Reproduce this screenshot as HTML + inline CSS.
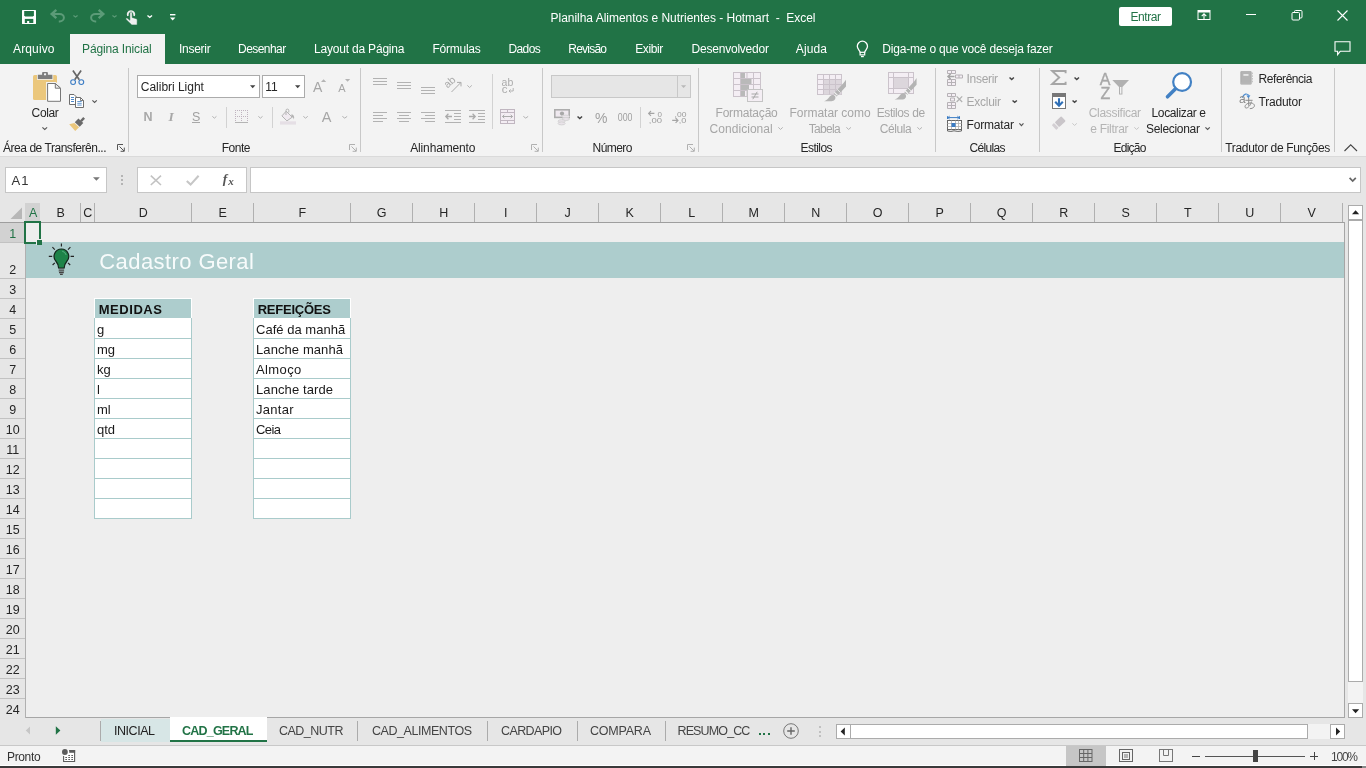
<!DOCTYPE html>
<html>
<head>
<meta charset="utf-8">
<title>Planilha Alimentos e Nutrientes - Hotmart - Excel</title>
<style>
*{box-sizing:border-box;margin:0;padding:0}
html,body{width:1366px;height:768px;overflow:hidden;background:#e6e6e6;font-family:"Liberation Sans",sans-serif;font-size:12px;color:#262626;will-change:transform}
.a,.t{position:absolute}
.t{white-space:nowrap}
svg{overflow:visible}
</style>
</head>
<body>
<div class="a" style="left:0px;top:0px;width:1366px;height:64px;background:#217346;"></div>
<svg class="a" style="left:22px;top:10px;" width="14" height="14" viewBox="0 0 14 14"><rect x="0" y="0" width="14" height="14" rx="0.6" fill="#fff"/><path d="M2.2 1 H11.9 V5.6 L10.9 6.6 H3.2 L2.2 5.6 Z" fill="#217346"/><rect x="2.8" y="8.9" width="8.5" height="4.1" fill="#217346"/><rect x="5.1" y="11" width="2.1" height="2.2" fill="#fff"/></svg>
<svg class="a" style="left:50px;top:9.4px;" width="16" height="15" viewBox="0 0 16 15"><path d="M2 5 H9.6 A4.3 3.7 0 0 1 9.6 12.4 H8.8" fill="none" stroke="#5c9b78" stroke-width="2"/><path d="M6.3 0.9 L1.7 5 L6.3 9.1" fill="none" stroke="#5c9b78" stroke-width="2.4"/></svg>
<svg class="a" style="left:71.6px;top:14.2px;" width="7.0" height="4.4" viewBox="0 0 7.0 4.4"><path d="M1.42 1.42 L3.50 2.98 L5.58 1.42" fill="none" stroke="#5c9b78" stroke-width="1.2"/></svg>
<svg class="a" style="left:90px;top:9.4px;" width="16" height="15" viewBox="0 0 16 15"><path d="M13 5 H5.4 A4.3 3.7 0 0 0 5.4 12.4 H6.2" fill="none" stroke="#5c9b78" stroke-width="2"/><path d="M8.7 0.9 L13.3 5 L8.7 9.1" fill="none" stroke="#5c9b78" stroke-width="2.4"/></svg>
<svg class="a" style="left:110.6px;top:14.2px;" width="7.0" height="4.4" viewBox="0 0 7.0 4.4"><path d="M1.42 1.42 L3.50 2.98 L5.58 1.42" fill="none" stroke="#5c9b78" stroke-width="1.2"/></svg>
<svg class="a" style="left:125px;top:8px;" width="14" height="18" viewBox="0 0 14 18"><path d="M3.0 7.9 A3.3 3.3 0 1 1 9.0 7.8" fill="none" stroke="#f0f0f0" stroke-width="1.9"/><path d="M4.9 5 a1.15 1.15 0 0 1 2.3 0 V9.5 L11.3 10.7 a1.2 1.2 0 0 1 0.9 1.3 L12.1 16.9 H6.8 L1.1 11.5 a0.9 0.9 0 0 1 1.3 -1.3 L4.9 12.3 Z" fill="#f0f0f0" stroke="#217346" stroke-width="0.5"/></svg>
<svg class="a" style="left:146.2px;top:14px;" width="7.5" height="4.8" viewBox="0 0 7.5 4.8"><path d="M1.46 1.46 L3.75 3.35 L6.04 1.46" fill="none" stroke="#fff" stroke-width="1.3"/></svg>
<svg class="a" style="left:169.8px;top:13.8px;" width="6" height="7" viewBox="0 0 6 7"><rect x="0" y="0" width="5.4" height="1.4" fill="#fff"/><path d="M0 3.6 H5.4 L2.7 6.4 Z" fill="#fff"/></svg>
<div class="t" style="left:550.50px;top:11px;font-size:12px;line-height:14px;height:14px;color:#fff;letter-spacing:-0.022px;white-space:pre;">Planilha Alimentos e Nutrientes - Hotmart  -  Excel</div>
<div class="a" style="left:1119px;top:7px;width:53px;height:19px;background:#fff;border-radius:2px;"></div>
<div class="t" style="left:1130.50px;top:10px;font-size:12px;line-height:14px;height:14px;color:#217346;letter-spacing:-0.436px;">Entrar</div>
<svg class="a" style="left:1197px;top:9px;" width="14" height="12" viewBox="0 0 14 12"><rect x="1" y="1.5" width="12" height="9" fill="none" stroke="#fff" stroke-width="1"/><rect x="1" y="1.5" width="12" height="2" fill="#fff"/><path d="M7 10 V4.8 M4.7 7.1 L7 4.8 L9.3 7.1" fill="none" stroke="#fff" stroke-width="1.1"/></svg>
<div class="a" style="left:1246px;top:14px;width:10px;height:1px;background:#fff;"></div>
<svg class="a" style="left:1291px;top:9px;" width="12" height="12" viewBox="0 0 12 12"><rect x="1" y="3.5" width="7.5" height="7.5" rx="1" fill="none" stroke="#fff" stroke-width="1"/><path d="M3.5 3.3 V2.5 A1 1 0 0 1 4.5 1.5 H10 A1 1 0 0 1 11 2.5 V8 A1 1 0 0 1 10 9 H8.8" fill="none" stroke="#fff" stroke-width="1"/></svg>
<svg class="a" style="left:1337px;top:10px;" width="11" height="11" viewBox="0 0 11 11"><path d="M0.5 0.5 L10.5 10.5 M10.5 0.5 L0.5 10.5" stroke="#fff" stroke-width="1.1" fill="none"/></svg>
<div class="a" style="left:70px;top:34px;width:95px;height:30px;background:#f3f3f3;"></div>
<div class="t" style="left:13.00px;top:42px;font-size:12px;line-height:14px;height:14px;color:#fff;letter-spacing:0.135px;">Arquivo</div>
<div class="t" style="left:82.00px;top:42px;font-size:12px;line-height:14px;height:14px;color:#217346;letter-spacing:-0.125px;">Página Inicial</div>
<div class="t" style="left:179.00px;top:42px;font-size:12px;line-height:14px;height:14px;color:#fff;letter-spacing:-0.265px;">Inserir</div>
<div class="t" style="left:238.00px;top:42px;font-size:12px;line-height:14px;height:14px;color:#fff;letter-spacing:-0.540px;">Desenhar</div>
<div class="t" style="left:314.00px;top:42px;font-size:12px;line-height:14px;height:14px;color:#fff;letter-spacing:-0.194px;">Layout da Página</div>
<div class="t" style="left:432.50px;top:42px;font-size:12px;line-height:14px;height:14px;color:#fff;letter-spacing:-0.251px;">Fórmulas</div>
<div class="t" style="left:508.50px;top:42px;font-size:12px;line-height:14px;height:14px;color:#fff;letter-spacing:-0.609px;">Dados</div>
<div class="t" style="left:568.25px;top:42px;font-size:12px;line-height:14px;height:14px;color:#fff;letter-spacing:-0.767px;">Revisão</div>
<div class="t" style="left:635.25px;top:42px;font-size:12px;line-height:14px;height:14px;color:#fff;letter-spacing:-0.401px;">Exibir</div>
<div class="t" style="left:691.50px;top:42px;font-size:12px;line-height:14px;height:14px;color:#fff;letter-spacing:-0.212px;">Desenvolvedor</div>
<div class="t" style="left:795.75px;top:42px;font-size:12px;line-height:14px;height:14px;color:#fff;letter-spacing:0.140px;">Ajuda</div>
<div class="t" style="left:882.25px;top:42px;font-size:12px;line-height:14px;height:14px;color:#fff;letter-spacing:-0.187px;">Diga-me o que você deseja fazer</div>
<svg class="a" style="left:856px;top:40px;" width="13" height="18" viewBox="0 0 13 18"><path d="M4.1 12.3 C3.7 10.4 1.3 9.2 1.3 6.3 a5.1 5.1 0 0 1 10.2 0 C11.5 9.2 9.1 10.4 8.7 12.3" fill="none" stroke="#fff" stroke-width="1.3"/><rect x="4.1" y="12.3" width="4.6" height="2.6" fill="none" stroke="#fff" stroke-width="1.2"/><path d="M5 16.6 H7.8" stroke="#fff" stroke-width="1.2"/></svg>
<svg class="a" style="left:1334px;top:41px;" width="17" height="15" viewBox="0 0 17 15"><path d="M1 0.8 H16 V10.3 H6.2 L3.6 13.6 V10.3 H1 Z" fill="none" stroke="#fff" stroke-width="1.1"/></svg>
<div class="a" style="left:0px;top:64px;width:1366px;height:92px;background:#f3f3f3;"></div>
<div class="a" style="left:0px;top:156px;width:1366px;height:1px;background:#dadada;"></div>
<div class="a" style="left:128px;top:68px;width:1px;height:84px;background:#c8c8c8;"></div>
<div class="a" style="left:360px;top:68px;width:1px;height:84px;background:#c8c8c8;"></div>
<div class="a" style="left:542px;top:68px;width:1px;height:84px;background:#c8c8c8;"></div>
<div class="a" style="left:698px;top:68px;width:1px;height:84px;background:#c8c8c8;"></div>
<div class="a" style="left:935px;top:68px;width:1px;height:84px;background:#c8c8c8;"></div>
<div class="a" style="left:1039px;top:68px;width:1px;height:84px;background:#c8c8c8;"></div>
<div class="a" style="left:1221px;top:68px;width:1px;height:84px;background:#c8c8c8;"></div>
<div class="a" style="left:1334px;top:68px;width:1px;height:84px;background:#c8c8c8;"></div>
<div class="a" style="left:226px;top:107px;width:1px;height:21px;background:#d2d2d2;"></div>
<div class="a" style="left:272px;top:107px;width:1px;height:21px;background:#d2d2d2;"></div>
<div class="a" style="left:492px;top:74px;width:1px;height:55px;background:#d2d2d2;"></div>
<div class="a" style="left:640px;top:107px;width:1px;height:21px;background:#d2d2d2;"></div>
<div class="t" style="left:3.00px;top:141px;font-size:12px;line-height:14px;height:14px;color:#262626;letter-spacing:-0.461px;">Área de Transferên...</div>
<div class="t" style="left:221.70px;top:141px;font-size:12px;line-height:14px;height:14px;color:#262626;letter-spacing:-0.496px;">Fonte</div>
<div class="t" style="left:410.20px;top:141px;font-size:12px;line-height:14px;height:14px;color:#262626;letter-spacing:-0.141px;">Alinhamento</div>
<div class="t" style="left:592.60px;top:141px;font-size:12px;line-height:14px;height:14px;color:#262626;letter-spacing:-0.576px;">Número</div>
<div class="t" style="left:800.60px;top:141px;font-size:12px;line-height:14px;height:14px;color:#262626;letter-spacing:-0.557px;">Estilos</div>
<div class="t" style="left:969.60px;top:141px;font-size:12px;line-height:14px;height:14px;color:#262626;letter-spacing:-0.670px;">Células</div>
<div class="t" style="left:1113.60px;top:141px;font-size:12px;line-height:14px;height:14px;color:#262626;letter-spacing:-0.778px;">Edição</div>
<div class="t" style="left:1225.30px;top:141px;font-size:12px;line-height:14px;height:14px;color:#262626;letter-spacing:-0.330px;">Tradutor de Funções</div>
<svg class="a" style="left:117px;top:144px;" width="8" height="8" viewBox="0 0 8 8"><path d="M0.5 6 V0.5 H6" fill="none" stroke="#555" stroke-width="1"/><path d="M2.5 2.5 L7 7 M7.3 3.6 V7.3 H3.6" fill="none" stroke="#555" stroke-width="1"/></svg>
<svg class="a" style="left:349px;top:144px;" width="8" height="8" viewBox="0 0 8 8"><path d="M0.5 6 V0.5 H6" fill="none" stroke="#b0b0b0" stroke-width="1"/><path d="M2.5 2.5 L7 7 M7.3 3.6 V7.3 H3.6" fill="none" stroke="#b0b0b0" stroke-width="1"/></svg>
<svg class="a" style="left:531px;top:144px;" width="8" height="8" viewBox="0 0 8 8"><path d="M0.5 6 V0.5 H6" fill="none" stroke="#b0b0b0" stroke-width="1"/><path d="M2.5 2.5 L7 7 M7.3 3.6 V7.3 H3.6" fill="none" stroke="#b0b0b0" stroke-width="1"/></svg>
<svg class="a" style="left:687px;top:144px;" width="8" height="8" viewBox="0 0 8 8"><path d="M0.5 6 V0.5 H6" fill="none" stroke="#b0b0b0" stroke-width="1"/><path d="M2.5 2.5 L7 7 M7.3 3.6 V7.3 H3.6" fill="none" stroke="#b0b0b0" stroke-width="1"/></svg>
<svg class="a" style="left:1344px;top:144px;" width="14" height="8" viewBox="0 0 14 8"><path d="M0.5 7 L6.7 0.8 L13 7" fill="none" stroke="#444" stroke-width="1.1"/></svg>
<svg class="a" style="left:33px;top:71px;" width="29" height="32" viewBox="0 0 29 32"><rect x="0" y="4" width="24" height="25" rx="1.6" fill="#ebc77c"/><path d="M4 8.7 V3.1 H8.4 V1.4 a1 1 0 0 1 1 -1 H14.6 a1 1 0 0 1 1 1 V3.1 H20.2 V8.7 Z" fill="#f3f3f3"/><path d="M4.8 7.9 V3.8 H9.1 V1.9 a0.9 0.9 0 0 1 0.9 -0.9 H14 a0.9 0.9 0 0 1 0.9 0.9 V3.8 H19.4 V7.9 Z" fill="#7d7d7d"/><rect x="11" y="2.3" width="2.1" height="2" rx="0.4" fill="#f3f3f3"/><path d="M14.6 12.5 H22.3 L27.5 17.2 V30.3 H14.6 Z" fill="#fff" stroke="#f3f3f3" stroke-width="3"/><path d="M14.6 12.5 H22.3 L27.5 17.2 V30.3 H14.6 Z" fill="#fff" stroke="#777" stroke-width="1"/><path d="M22.3 12.5 V17.2 H27.5 Z" fill="#ececec" stroke="#777" stroke-width="1" stroke-linejoin="bevel"/></svg>
<div class="t" style="left:31.60px;top:106px;font-size:12px;line-height:14px;height:14px;color:#262626;letter-spacing:-0.369px;">Colar</div>
<svg class="a" style="left:41.2px;top:125.7px;" width="7.5" height="4.8" viewBox="0 0 7.5 4.8"><path d="M1.39 1.39 L3.75 3.41 L6.12 1.39" fill="none" stroke="#555" stroke-width="1.1"/></svg>
<svg class="a" style="left:69px;top:70px;" width="16" height="16" viewBox="0 0 16 16"><path d="M3.9 0.6 L10.3 9.8 M12.1 0.6 L5.7 9.8" stroke="#666" stroke-width="1.7" fill="none"/><circle cx="4.1" cy="12.1" r="2.4" fill="none" stroke="#3b7cc4" stroke-width="1.1"/><circle cx="12.3" cy="12.1" r="2.4" fill="none" stroke="#3b7cc4" stroke-width="1.1"/></svg>
<svg class="a" style="left:69px;top:94px;" width="16" height="15" viewBox="0 0 16 15"><path d="M0.5 0.5 H5 L7.5 3 V10.5 H0.5 Z" fill="#fff" stroke="#6e6e6e" stroke-width="1"/><path d="M2 3.5 H5 M2 5.5 H5 M2 7.5 H5" stroke="#3b7cc4" stroke-width="0.9"/><path d="M6.5 3.5 H11.5 L14.5 6.5 V13.5 H6.5 Z" fill="#fff" stroke="#6e6e6e" stroke-width="1"/><path d="M11.5 3.5 V6.5 H14.5" fill="none" stroke="#6e6e6e" stroke-width="0.9"/><path d="M8.3 7.5 H12.7 M8.3 9.3 H12.7 M8.3 11.1 H12.7" stroke="#3b7cc4" stroke-width="0.8"/></svg>
<svg class="a" style="left:91.4px;top:98.7px;" width="7.2" height="4.9" viewBox="0 0 7.2 4.9"><path d="M1.39 1.39 L3.60 3.51 L5.81 1.39" fill="none" stroke="#555" stroke-width="1.1"/></svg>
<svg class="a" style="left:69px;top:116px;" width="17" height="16" viewBox="0 0 17 16"><path d="M11 4.4 L14.2 1 L16 2.7 L12.8 6.1 Z" fill="#6a6a6a"/><path d="M5.8 6.2 L9.4 2.4 L14.3 7 L10.7 10.8 Z" fill="#6a6a6a"/><path d="M0.2 8.2 L5.4 6.9 L10.1 11.3 L6.2 15 Z" fill="#ebc77c"/></svg>
<div class="a" style="left:137px;top:75px;width:123px;height:23px;background:#fff;border:1px solid #ababab;"></div>
<div class="t" style="left:140.80px;top:80px;font-size:12px;line-height:14px;height:14px;color:#262626;letter-spacing:-0.022px;">Calibri Light</div>
<svg class="a" style="left:250px;top:85px;" width="6" height="4" viewBox="0 0 6 4"><path d="M0 0.3 H5.4 L2.7 3.3 Z" fill="#444"/></svg>
<div class="a" style="left:262px;top:75px;width:43px;height:23px;background:#fff;border:1px solid #ababab;"></div>
<div class="t" style="left:265.20px;top:80px;font-size:12px;line-height:14px;height:14px;color:#262626;">11</div>
<svg class="a" style="left:295px;top:85px;" width="6" height="4" viewBox="0 0 6 4"><path d="M0 0.3 H5.4 L2.7 3.3 Z" fill="#444"/></svg>
<div class="t" style="left:313.00px;top:79px;font-size:14px;line-height:16px;height:16px;color:#a6a6a6;">A</div>
<svg class="a" style="left:321px;top:79px;" width="6" height="3" viewBox="0 0 6 3"><path d="M0 3 L2.6 0.2 L5.2 3 Z" fill="#b4b4b4"/></svg>
<div class="t" style="left:338.20px;top:82px;font-size:11px;line-height:12px;height:12px;color:#a6a6a6;">A</div>
<svg class="a" style="left:345px;top:79px;" width="6" height="3" viewBox="0 0 6 3"><path d="M0 0 H5.2 L2.6 2.8 Z" fill="#b4b4b4"/></svg>
<div class="t" style="left:143.50px;top:110px;font-size:12.5px;line-height:14px;height:14px;color:#a8a8a8;font-weight:bold;">N</div>
<div class="t" style="left:168.40px;top:109px;font-size:13.5px;line-height:15px;height:15px;color:#a8a8a8;font-weight:bold;font-style:italic;font-family:'Liberation Serif',serif;">I</div>
<div class="t" style="left:192.10px;top:110px;font-size:12.5px;line-height:14px;height:14px;color:#a0a0a0;">S</div>
<div class="a" style="left:192px;top:122px;width:8px;height:1px;background:#a8a8a8;"></div>
<svg class="a" style="left:210.6px;top:115px;" width="6.8" height="4.5" viewBox="0 0 6.8 4.5"><path d="M1.35 1.35 L3.40 3.15 L5.45 1.35" fill="none" stroke="#b2b2b2" stroke-width="1"/></svg>
<svg class="a" style="left:235px;top:110px;" width="13" height="13" viewBox="0 0 13 13"><path d="M0 0.5 H13 M0 6.5 H13 M0.5 0 V12 M6.5 0 V12 M12.5 0 V12" fill="none" stroke="#bfb3bf" stroke-width="1" stroke-dasharray="1 1" shape-rendering="crispEdges"/><path d="M0 12.5 H13" stroke="#b4b4b4" stroke-width="1" shape-rendering="crispEdges"/></svg>
<svg class="a" style="left:256.7px;top:115px;" width="6.9" height="4.5" viewBox="0 0 6.9 4.5"><path d="M1.35 1.35 L3.45 3.15 L5.55 1.35" fill="none" stroke="#b2b2b2" stroke-width="1"/></svg>
<svg class="a" style="left:280px;top:109px;" width="16" height="16" viewBox="0 0 16 16"><path d="M6.2 2.2 L12.2 8.2 L6.9 11.9 L1.9 6.9 Z" fill="#f0eaf0" stroke="#b4b4b4" stroke-width="1"/><path d="M6 6 V1.5 a1.4 1.4 0 0 1 2.8 0 V3.5" fill="none" stroke="#b4b4b4" stroke-width="1"/><path d="M11.5 5.2 c2.6 0.3 3.2 3 2.3 5.2 c-0.5 -1.6 -1.2 -2.4 -2.6 -2.8 Z" fill="#b4b4b4"/><rect x="0" y="12.3" width="16" height="3.3" fill="#e5dfe5"/></svg>
<svg class="a" style="left:302.4px;top:115px;" width="7.1" height="4.5" viewBox="0 0 7.1 4.5"><path d="M1.35 1.35 L3.55 3.15 L5.75 1.35" fill="none" stroke="#b2b2b2" stroke-width="1"/></svg>
<div class="t" style="left:321.80px;top:109px;font-size:14.5px;line-height:16px;height:16px;color:#a6a6a6;">A</div>
<svg class="a" style="left:341.2px;top:115px;" width="7.5" height="4.5" viewBox="0 0 7.5 4.5"><path d="M1.35 1.35 L3.75 3.15 L6.15 1.35" fill="none" stroke="#b2b2b2" stroke-width="1"/></svg>
<div class="a" style="left:373px;top:78px;width:14px;height:1px;background:#b2b2b2;"></div>
<div class="a" style="left:373px;top:81px;width:14px;height:1px;background:#b2b2b2;"></div>
<div class="a" style="left:373px;top:84px;width:14px;height:1px;background:#b2b2b2;"></div>
<div class="a" style="left:397px;top:82px;width:14px;height:1px;background:#b2b2b2;"></div>
<div class="a" style="left:397px;top:85px;width:14px;height:1px;background:#b2b2b2;"></div>
<div class="a" style="left:397px;top:88px;width:14px;height:1px;background:#b2b2b2;"></div>
<div class="a" style="left:421px;top:87px;width:14px;height:1px;background:#b2b2b2;"></div>
<div class="a" style="left:421px;top:90px;width:14px;height:1px;background:#b2b2b2;"></div>
<div class="a" style="left:421px;top:93px;width:14px;height:1px;background:#b2b2b2;"></div>
<div class="a" style="left:373px;top:112px;width:14px;height:1px;background:#b2b2b2;"></div>
<div class="a" style="left:373px;top:115px;width:10px;height:1px;background:#b2b2b2;"></div>
<div class="a" style="left:373px;top:118px;width:14px;height:1px;background:#b2b2b2;"></div>
<div class="a" style="left:373px;top:121px;width:10px;height:1px;background:#b2b2b2;"></div>
<div class="a" style="left:397.0px;top:112px;width:14px;height:1px;background:#b2b2b2;"></div>
<div class="a" style="left:399.0px;top:115px;width:10px;height:1px;background:#b2b2b2;"></div>
<div class="a" style="left:397.0px;top:118px;width:14px;height:1px;background:#b2b2b2;"></div>
<div class="a" style="left:399.0px;top:121px;width:10px;height:1px;background:#b2b2b2;"></div>
<div class="a" style="left:421px;top:112px;width:14px;height:1px;background:#b2b2b2;"></div>
<div class="a" style="left:425px;top:115px;width:10px;height:1px;background:#b2b2b2;"></div>
<div class="a" style="left:421px;top:118px;width:14px;height:1px;background:#b2b2b2;"></div>
<div class="a" style="left:425px;top:121px;width:10px;height:1px;background:#b2b2b2;"></div>
<svg class="a" style="left:445px;top:78px;" width="17" height="15" viewBox="0 0 17 15"><text x="0" y="0" font-family="Liberation Sans" font-size="10.5" fill="#ababab" transform="translate(2.6,10.6) rotate(-42)">ab</text><path d="M6.5 14 L15.6 4.8 M12 4.4 H16 V8.4" fill="none" stroke="#ababab" stroke-width="1"/></svg>
<svg class="a" style="left:465.5px;top:84px;" width="7.2" height="4.9" viewBox="0 0 7.2 4.9"><path d="M1.35 1.35 L3.60 3.55 L5.85 1.35" fill="none" stroke="#b2b2b2" stroke-width="1"/></svg>
<svg class="a" style="left:445px;top:110px;" width="16" height="13" viewBox="0 0 16 13"><path d="M0 0.5 H16 M0 12.5 H16 M9 3.5 H16 M9 6.5 H16 M9 9.5 H16" stroke="#b2b2b2" stroke-width="1"/><path d="M0.8 6.5 H7 M3.4 3.8 L0.8 6.5 L3.4 9.2" fill="none" stroke="#ababab" stroke-width="1.3"/></svg>
<svg class="a" style="left:469px;top:110px;" width="16" height="13" viewBox="0 0 16 13"><path d="M0 0.5 H16 M0 12.5 H16 M9 3.5 H16 M9 6.5 H16 M9 9.5 H16" stroke="#b2b2b2" stroke-width="1"/><path d="M0 6.5 H6.2 M3.6 3.8 L6.2 6.5 L3.6 9.2" fill="none" stroke="#ababab" stroke-width="1.3"/></svg>
<div class="t" style="left:501.60px;top:76px;font-size:10.5px;line-height:12px;height:12px;color:#ababab;">ab</div>
<div class="t" style="left:501.80px;top:83px;font-size:11.5px;line-height:12px;height:12px;color:#ababab;">c</div>
<svg class="a" style="left:508px;top:88px;" width="6" height="5" viewBox="0 0 6 5"><path d="M5.2 0 V3 H1 M2.6 1.4 L1 3 L2.6 4.6" fill="none" stroke="#ababab" stroke-width="0.9"/></svg>
<svg class="a" style="left:500px;top:109px;" width="15" height="15" viewBox="0 0 15 15"><rect x="0.5" y="0.5" width="14" height="14" fill="#f3edf3" stroke="#c0b6c0" stroke-width="1"/><path d="M0.5 3.5 H14.5 M0.5 11.5 H14.5 M7.5 0.5 V3.5 M7.5 11.5 V14.5" stroke="#c0b6c0" stroke-width="1"/><path d="M2.5 7.5 H12.5 M4.3 5.8 L2.5 7.5 L4.3 9.2 M10.7 5.8 L12.5 7.5 L10.7 9.2" fill="none" stroke="#ababab" stroke-width="1"/></svg>
<svg class="a" style="left:522.3px;top:115px;" width="7.5" height="4.5" viewBox="0 0 7.5 4.5"><path d="M1.35 1.35 L3.75 3.15 L6.15 1.35" fill="none" stroke="#b2b2b2" stroke-width="1"/></svg>
<div class="a" style="left:551px;top:75px;width:140px;height:23px;background:#e6e6e6;border:1px solid #c8c8c8;"></div>
<div class="a" style="left:677px;top:76px;width:1px;height:21px;background:#c8c8c8;"></div>
<svg class="a" style="left:681px;top:85px;" width="6" height="4" viewBox="0 0 6 4"><path d="M0 0.2 H5.2 L2.6 3 Z" fill="#b8b8b8"/></svg>
<svg class="a" style="left:554px;top:109px;" width="17" height="16" viewBox="0 0 17 16"><rect x="0.8" y="0.8" width="14.4" height="7.6" fill="#efe9ef" stroke="#adadad" stroke-width="1.6"/><circle cx="8" cy="4.6" r="2.1" fill="#a8a8a8"/><ellipse cx="11.8" cy="7.6" rx="3.6" ry="1.5" fill="#e9e3e9" stroke="#cfcfcf" stroke-width="0.8"/><ellipse cx="11.8" cy="10" rx="3.6" ry="1.5" fill="#e9e3e9" stroke="#cfcfcf" stroke-width="0.8"/><ellipse cx="7.6" cy="12.2" rx="3.6" ry="1.5" fill="#e9e3e9" stroke="#cfcfcf" stroke-width="0.8"/><ellipse cx="7.6" cy="14.4" rx="3.6" ry="1.5" fill="#e9e3e9" stroke="#cfcfcf" stroke-width="0.8"/></svg>
<svg class="a" style="left:576.2px;top:115px;" width="7.6" height="5" viewBox="0 0 7.6 5"><path d="M1.52 1.52 L3.80 3.48 L6.07 1.52" fill="none" stroke="#444" stroke-width="1.5"/></svg>
<div class="t" style="left:595.00px;top:110px;font-size:14px;line-height:16px;height:16px;color:#a0a0a0;">%</div>
<div class="t" style="left:617.80px;top:113px;font-size:8.8px;line-height:10px;height:10px;color:#a0a0a0;transform:scaleY(1.2);transform-origin:0 8px;">000</div>
<svg class="a" style="left:648px;top:110px;" width="15" height="14" viewBox="0 0 15 14"><path d="M0.6 3.4 H6.4 M3 1 L0.6 3.4 L3 5.8" fill="none" stroke="#a4a4a4" stroke-width="1.1"/><text x="9.6" y="6.6" font-family="Liberation Sans" font-size="8" fill="#9c9c9c">0</text><text x="0.8" y="13.4" font-family="Liberation Sans" font-size="8" fill="#9c9c9c" textLength="13.2" lengthAdjust="spacingAndGlyphs">,00</text></svg>
<svg class="a" style="left:672px;top:110px;" width="15" height="14" viewBox="0 0 15 14"><text x="2.6" y="6.6" font-family="Liberation Sans" font-size="8" fill="#9c9c9c" textLength="11.8" lengthAdjust="spacingAndGlyphs">,00</text><path d="M0.2 10.4 H6 M3.6 8 L6 10.4 L3.6 12.8" fill="none" stroke="#a4a4a4" stroke-width="1.1"/><text x="6.8" y="13.4" font-family="Liberation Sans" font-size="8" fill="#9c9c9c" textLength="7.6" lengthAdjust="spacingAndGlyphs">,0</text></svg>
<svg class="a" style="left:733px;top:72px;" width="31" height="31" viewBox="0 0 31 31"><rect x="0.5" y="0.5" width="27" height="24" fill="#f4eef4" stroke="#cbc3cb" stroke-width="1"/><path d="M7.5 0.5 V24.5 M14 0.5 V24.5 M20.5 0.5 V24.5 M0.5 6.5 H27.5 M0.5 12.5 H27.5 M0.5 18.5 H27.5" stroke="#cbc3cb" stroke-width="1"/><rect x="8" y="1" width="4" height="5" fill="#b9b9b9"/><rect x="8" y="7" width="10.5" height="5" fill="#b9b9b9"/><rect x="8" y="13" width="8" height="5" fill="#b9b9b9"/><rect x="8" y="19" width="4" height="5" fill="#b9b9b9"/><rect x="14.5" y="17.5" width="15" height="12" fill="#f4eef4" stroke="#c4c4c4" stroke-width="1"/><path d="M18.5 22 H25.5 M18.5 25 H25.5 M24.2 19.8 L19.8 27.2" stroke="#a8a8a8" stroke-width="1" fill="none"/></svg>
<div class="t" style="left:715.50px;top:106px;font-size:12px;line-height:14px;height:14px;color:#a6a6a6;letter-spacing:-0.192px;">Formatação</div>
<div class="t" style="left:709.60px;top:122px;font-size:12px;line-height:14px;height:14px;color:#a6a6a6;letter-spacing:0.039px;">Condicional</div>
<svg class="a" style="left:776.6px;top:125.7px;" width="7.1" height="4.8" viewBox="0 0 7.1 4.8"><path d="M1.35 1.35 L3.55 3.45 L5.75 1.35" fill="none" stroke="#b2b2b2" stroke-width="1"/></svg>
<svg class="a" style="left:817px;top:74px;" width="30" height="29" viewBox="0 0 30 29"><rect x="0.5" y="0.5" width="24" height="20" fill="#f4eef4" stroke="#cbc3cb" stroke-width="1"/><rect x="6.5" y="5.5" width="18" height="15" fill="#dcd6dc"/><path d="M6.5 0.5 V20.5 M12.5 0.5 V20.5 M18.5 0.5 V20.5 M0.5 5.5 H24.5 M0.5 10.5 H24.5 M0.5 15.5 H24.5" stroke="#cbc3cb" stroke-width="1"/><g transform="translate(7,5.2)"><path d="M0 22 C2.5 21.5 4 19.5 5.5 17.5 C7.5 15 10.5 15.3 11.3 17.6 C12 20 10 22 7.5 22 Z" fill="#b4b4b4"/><path d="M9.6 14.6 L19.5 3.8 L22 0.5 V7.2 L12.8 17.2 Z" fill="#b4b4b4"/><path d="M10.4 13.2 L13.6 16.2" stroke="#f3f3f3" stroke-width="1.2"/><path d="M13.2 10.2 L16.4 13.2" stroke="#f3f3f3" stroke-width="0.9"/></g></svg>
<div class="t" style="left:789.50px;top:106px;font-size:12px;line-height:14px;height:14px;color:#a6a6a6;letter-spacing:-0.021px;">Formatar como</div>
<div class="t" style="left:808.80px;top:122px;font-size:12px;line-height:14px;height:14px;color:#a6a6a6;letter-spacing:-0.712px;">Tabela</div>
<svg class="a" style="left:844.5px;top:125.7px;" width="7.3" height="4.8" viewBox="0 0 7.3 4.8"><path d="M1.35 1.35 L3.65 3.45 L5.95 1.35" fill="none" stroke="#b2b2b2" stroke-width="1"/></svg>
<svg class="a" style="left:888px;top:72px;" width="30" height="29" viewBox="0 0 30 29"><rect x="0.5" y="0.5" width="25" height="21" fill="#f4eef4" stroke="#cbc3cb" stroke-width="1"/><rect x="5.5" y="5.5" width="15" height="11" fill="#dcd6dc"/><path d="M5.5 0.5 V21.5 M20.5 0.5 V21.5 M0.5 5.5 H25.5 M0.5 16.5 H25.5" stroke="#cbc3cb" stroke-width="1"/><g transform="translate(6.6,5.6)"><path d="M0 22 C2.5 21.5 4 19.5 5.5 17.5 C7.5 15 10.5 15.3 11.3 17.6 C12 20 10 22 7.5 22 Z" fill="#b4b4b4"/><path d="M9.6 14.6 L19.5 3.8 L22 0.5 V7.2 L12.8 17.2 Z" fill="#b4b4b4"/><path d="M10.4 13.2 L13.6 16.2" stroke="#f3f3f3" stroke-width="1.2"/><path d="M13.2 10.2 L16.4 13.2" stroke="#f3f3f3" stroke-width="0.9"/></g></svg>
<div class="t" style="left:876.70px;top:106px;font-size:12px;line-height:14px;height:14px;color:#a6a6a6;letter-spacing:-0.403px;">Estilos de</div>
<div class="t" style="left:879.80px;top:122px;font-size:12px;line-height:14px;height:14px;color:#a6a6a6;letter-spacing:-0.444px;">Célula</div>
<svg class="a" style="left:915.5px;top:125.7px;" width="7.3" height="4.8" viewBox="0 0 7.3 4.8"><path d="M1.35 1.35 L3.65 3.45 L5.95 1.35" fill="none" stroke="#b2b2b2" stroke-width="1"/></svg>
<svg class="a" style="left:947px;top:70px;" width="16" height="16" viewBox="0 0 16 16"><path d="M0.5 0.5 H8.5 V3.5 H0.5 Z M4.5 0.5 V3.5 M0.5 9.5 H8.5 V15.5 H0.5 Z M4.5 9.5 V15.5 M0.5 12.5 H8.5 M8.5 5 H15.5 V8 H8.5 Z M12 5 V8" fill="#f4eef4" stroke="#b6b2b6" stroke-width="1"/><path d="M1 6.5 H7.5 M3.6 4 L1 6.5 L3.6 9" fill="none" stroke="#a4a4a4" stroke-width="1.5"/></svg>
<div class="t" style="left:966.60px;top:72px;font-size:12px;line-height:14px;height:14px;color:#a6a6a6;letter-spacing:-0.323px;">Inserir</div>
<svg class="a" style="left:1008.4px;top:75.9px;" width="7.4" height="5.0" viewBox="0 0 7.4 5.0"><path d="M1.52 1.52 L3.70 3.48 L5.87 1.52" fill="none" stroke="#444" stroke-width="1.5"/></svg>
<svg class="a" style="left:947px;top:93px;" width="16" height="16" viewBox="0 0 16 16"><path d="M0.5 0.5 H8.5 V3.5 H0.5 Z M4.5 0.5 V3.5 M0.5 9.5 H8.5 V15.5 H0.5 Z M4.5 9.5 V15.5 M0.5 12.5 H8.5 M3.5 5 H7.5 V8 H3.5 Z" fill="#f4eef4" stroke="#b6b2b6" stroke-width="1"/><path d="M9.6 3.4 L15.2 9 M15.2 3.4 L9.6 9" fill="none" stroke="#b0b0b0" stroke-width="1.2"/></svg>
<div class="t" style="left:966.60px;top:95px;font-size:12px;line-height:14px;height:14px;color:#a6a6a6;letter-spacing:-0.284px;">Excluir</div>
<svg class="a" style="left:1011.4px;top:98.7px;" width="7.4" height="4.9" viewBox="0 0 7.4 4.9"><path d="M1.52 1.52 L3.70 3.37 L5.87 1.52" fill="none" stroke="#444" stroke-width="1.5"/></svg>
<svg class="a" style="left:947px;top:116px;" width="15" height="16" viewBox="0 0 15 16"><path d="M0.5 0.2 V3 M12.5 0.2 V3 M0.5 1.6 H12.5 M2.6 0.2 L0.9 1.6 L2.6 3 M10.4 0.2 L12.1 1.6 L10.4 3" fill="none" stroke="#3b7cc4" stroke-width="1"/><rect x="0.5" y="4.5" width="14" height="9" fill="#fff" stroke="#666" stroke-width="1"/><path d="M4.5 4.5 V13.5 M8.5 4.5 V13.5 M11.5 4.5 V13.5 M0.5 7.5 H14.5 M0.5 10.5 H14.5" stroke="#b0b0b0" stroke-width="0.8"/><rect x="4.5" y="7" width="4" height="4" fill="#3b7cc4"/><path d="M0.5 13.5 V15 Q4 16 7 14.8 Q11 16 14.5 15 V13.5" fill="none" stroke="#666" stroke-width="1"/></svg>
<div class="t" style="left:966.60px;top:118px;font-size:12px;line-height:14px;height:14px;color:#262626;letter-spacing:-0.182px;">Formatar</div>
<svg class="a" style="left:1017.5px;top:122px;" width="6.9" height="5" viewBox="0 0 6.9 5"><path d="M1.42 1.42 L3.45 3.58 L5.48 1.42" fill="none" stroke="#555" stroke-width="1.2"/></svg>
<svg class="a" style="left:1051px;top:70px;" width="16" height="15" viewBox="0 0 16 15"><path d="M14.6 3.2 V1 H1.2 L8.2 7.5 L1.2 14 H14.6 V11.8" fill="none" stroke="#a6a6a6" stroke-width="1.9" stroke-linejoin="miter"/></svg>
<svg class="a" style="left:1073.3px;top:75.9px;" width="7.5" height="5.0" viewBox="0 0 7.5 5.0"><path d="M1.52 1.52 L3.75 3.48 L5.97 1.52" fill="none" stroke="#444" stroke-width="1.5"/></svg>
<svg class="a" style="left:1052px;top:93px;" width="14" height="16" viewBox="0 0 14 16"><rect x="0.5" y="0.5" width="13" height="15" fill="#fff" stroke="#777" stroke-width="1"/><rect x="0" y="0" width="14" height="4" fill="#777"/><path d="M7 5.2 V12.6 M3.2 8.8 L7 12.8 L10.8 8.8" fill="none" stroke="#2f6fb6" stroke-width="2.1"/></svg>
<svg class="a" style="left:1071.4px;top:98.7px;" width="7.2" height="4.9" viewBox="0 0 7.2 4.9"><path d="M1.52 1.52 L3.60 3.37 L5.67 1.52" fill="none" stroke="#444" stroke-width="1.5"/></svg>
<svg class="a" style="left:1052px;top:117px;" width="14" height="13" viewBox="0 0 14 13"><g transform="translate(6.7,6.1) rotate(-43)"><rect x="-2.4" y="-3.3" width="9" height="6.6" rx="1" fill="#c9c5c9"/><rect x="-6.4" y="-3.3" width="3.1" height="6.6" rx="0.6" fill="#d3cfd3"/></g></svg>
<svg class="a" style="left:1071.4px;top:122px;" width="7.2" height="4.8" viewBox="0 0 7.2 4.8"><path d="M1.35 1.35 L3.60 3.45 L5.85 1.35" fill="none" stroke="#c8c8c8" stroke-width="1"/></svg>
<div class="t" style="left:1099.80px;top:71px;font-size:16px;line-height:17px;height:17px;color:#a8a8a8;-webkit-text-stroke:0.35px #a8a8a8;">A</div>
<div class="t" style="left:1100.60px;top:85px;font-size:16px;line-height:17px;height:17px;color:#a8a8a8;-webkit-text-stroke:0.35px #a8a8a8;">Z</div>
<svg class="a" style="left:1112px;top:80px;" width="18" height="15" viewBox="0 0 18 15"><path d="M0.3 0 H17 L10.4 7 V14.6 H7 V7 Z" fill="#b0b0b0"/><rect x="8" y="7" width="1.4" height="6.6" fill="#f3f3f3"/></svg>
<div class="t" style="left:1088.70px;top:106px;font-size:12px;line-height:14px;height:14px;color:#b4b4b4;letter-spacing:-0.294px;">Classificar</div>
<div class="t" style="left:1090.30px;top:122px;font-size:12px;line-height:14px;height:14px;color:#b4b4b4;letter-spacing:-0.296px;">e Filtrar</div>
<svg class="a" style="left:1132.5px;top:125.7px;" width="7.2" height="4.8" viewBox="0 0 7.2 4.8"><path d="M1.35 1.35 L3.60 3.45 L5.85 1.35" fill="none" stroke="#c4c4c4" stroke-width="1"/></svg>
<svg class="a" style="left:1165px;top:70px;" width="28" height="29" viewBox="0 0 28 29"><circle cx="17.1" cy="12" r="8.9" fill="#fff" stroke="#4281c4" stroke-width="2.2"/><path d="M10.3 19 L2.5 26.8" stroke="#4281c4" stroke-width="3.6" stroke-linecap="round"/></svg>
<div class="t" style="left:1151.50px;top:106px;font-size:12px;line-height:14px;height:14px;color:#262626;letter-spacing:-0.353px;">Localizar e</div>
<div class="t" style="left:1146.00px;top:122px;font-size:12px;line-height:14px;height:14px;color:#262626;letter-spacing:-0.311px;">Selecionar</div>
<svg class="a" style="left:1203.5px;top:125.7px;" width="7.2" height="4.8" viewBox="0 0 7.2 4.8"><path d="M1.42 1.42 L3.60 3.38 L5.78 1.42" fill="none" stroke="#555" stroke-width="1.2"/></svg>
<svg class="a" style="left:1240px;top:71px;" width="14" height="14" viewBox="0 0 14 14"><rect x="0.4" y="0.2" width="11.2" height="13.4" rx="0.8" fill="#a2a2a2"/><rect x="1.2" y="0.8" width="9.6" height="10.6" fill="#b4b4b4"/><rect x="3.4" y="3.1" width="5.1" height="1.7" fill="#ececec"/><rect x="0.4" y="11.6" width="11.2" height="0.9" fill="#c9c9c9"/><path d="M12.5 1.6 V12" stroke="#c0c0c0" stroke-width="0.9" stroke-dasharray="1.6 1.1"/></svg>
<div class="t" style="left:1258.60px;top:72px;font-size:12px;line-height:14px;height:14px;color:#262626;letter-spacing:-0.459px;">Referência</div>
<svg class="a" style="left:1239px;top:92px;" width="17" height="18" viewBox="0 0 17 18"><path d="M3.2 5.6 Q6.3 -0.2 9.9 3.4" fill="none" stroke="#4a8bd0" stroke-width="1.2"/><path d="M7.4 3.6 L11.4 3.2 L9.5 6.4 Z" fill="#4a8bd0"/><text x="0" y="11.4" font-family="Liberation Sans" font-size="12" fill="#8c8c8c">a</text><path d="M6.4 8.3 H13.6 M9.7 5.8 V13.8 M12.4 9.6 C11.8 13.2 8.8 16.4 6.9 16 C5 15.4 6.2 11.9 10 11.1 C13.8 10.4 16.2 12.6 15.2 14.6 C14.4 16.2 12.2 16.7 10.8 16.6" fill="none" stroke="#8c8c8c" stroke-width="1"/></svg>
<div class="t" style="left:1258.60px;top:95px;font-size:12px;line-height:14px;height:14px;color:#262626;letter-spacing:-0.229px;">Tradutor</div>
<div class="a" style="left:5px;top:167px;width:102px;height:26px;background:#fff;border:1px solid #c6c6c6;"></div>
<div class="t" style="left:11.60px;top:173px;font-size:13px;line-height:15px;height:15px;color:#333;letter-spacing:1.099px;">A1</div>
<svg class="a" style="left:93px;top:177px;" width="7" height="4" viewBox="0 0 7 4"><path d="M0 0.2 H6.8 L3.4 3.8 Z" fill="#777"/></svg>
<div class="a" style="left:121px;top:175px;width:2px;height:2px;background:#b4b4b4;"></div>
<div class="a" style="left:121px;top:179px;width:2px;height:2px;background:#b4b4b4;"></div>
<div class="a" style="left:121px;top:183px;width:2px;height:2px;background:#b4b4b4;"></div>
<div class="a" style="left:137px;top:167px;width:110px;height:26px;background:#fff;border:1px solid #c6c6c6;"></div>
<svg class="a" style="left:150px;top:175px;" width="12" height="11" viewBox="0 0 12 11"><path d="M0.8 0.6 L11 10 M11 0.6 L0.8 10" stroke="#c2c2c2" stroke-width="1.6" fill="none"/></svg>
<svg class="a" style="left:186px;top:175px;" width="14" height="11" viewBox="0 0 14 11"><path d="M0.8 6 L4.6 9.6 L12.6 0.8" stroke="#c6c6c6" stroke-width="2.1" fill="none"/></svg>
<div class="t" style="left:222.80px;top:171px;font-size:13.5px;line-height:15px;height:15px;color:#555;font-weight:bold;font-style:italic;font-family:'Liberation Serif',serif;">f</div>
<div class="t" style="left:228.20px;top:175px;font-size:11px;line-height:12px;height:12px;color:#555;font-weight:bold;font-style:italic;font-family:'Liberation Serif',serif;">x</div>
<div class="a" style="left:250px;top:167px;width:1111px;height:26px;background:#fff;border:1px solid #c6c6c6;"></div>
<svg class="a" style="left:1349px;top:177px;" width="8" height="6" viewBox="0 0 8 6"><path d="M0.6 0.8 L3.7 4 L6.8 0.8" fill="none" stroke="#666" stroke-width="1.7"/></svg>
<div class="a" style="left:26px;top:223px;width:1318px;height:495px;background:#eeeeee;"></div>
<div class="a" style="left:25px;top:203px;width:15px;height:19px;background:#d2d2d2;"></div>
<div class="t" style="left:29.03px;top:206px;font-size:12.5px;line-height:14px;height:14px;color:#217346;">A</div>
<div class="a" style="left:80px;top:203px;width:1px;height:19px;background:#b0b0b0;"></div>
<div class="t" style="left:56.53px;top:206px;font-size:12.5px;line-height:14px;height:14px;color:#262626;">B</div>
<div class="a" style="left:94px;top:203px;width:1px;height:19px;background:#b0b0b0;"></div>
<div class="t" style="left:83.19px;top:206px;font-size:12.5px;line-height:14px;height:14px;color:#262626;">C</div>
<div class="a" style="left:191px;top:203px;width:1px;height:19px;background:#b0b0b0;"></div>
<div class="t" style="left:138.69px;top:206px;font-size:12.5px;line-height:14px;height:14px;color:#262626;">D</div>
<div class="a" style="left:253px;top:203px;width:1px;height:19px;background:#b0b0b0;"></div>
<div class="t" style="left:218.53px;top:206px;font-size:12.5px;line-height:14px;height:14px;color:#262626;">E</div>
<div class="a" style="left:350px;top:203px;width:1px;height:19px;background:#b0b0b0;"></div>
<div class="t" style="left:298.38px;top:206px;font-size:12.5px;line-height:14px;height:14px;color:#262626;">F</div>
<div class="a" style="left:412px;top:203px;width:1px;height:19px;background:#b0b0b0;"></div>
<div class="t" style="left:376.84px;top:206px;font-size:12.5px;line-height:14px;height:14px;color:#262626;">G</div>
<div class="a" style="left:474px;top:203px;width:1px;height:19px;background:#b0b0b0;"></div>
<div class="t" style="left:439.19px;top:206px;font-size:12.5px;line-height:14px;height:14px;color:#262626;">H</div>
<div class="a" style="left:536px;top:203px;width:1px;height:19px;background:#b0b0b0;"></div>
<div class="t" style="left:503.96px;top:206px;font-size:12.5px;line-height:14px;height:14px;color:#262626;">I</div>
<div class="a" style="left:598px;top:203px;width:1px;height:19px;background:#b0b0b0;"></div>
<div class="t" style="left:564.58px;top:206px;font-size:12.5px;line-height:14px;height:14px;color:#262626;">J</div>
<div class="a" style="left:660px;top:203px;width:1px;height:19px;background:#b0b0b0;"></div>
<div class="t" style="left:625.53px;top:206px;font-size:12.5px;line-height:14px;height:14px;color:#262626;">K</div>
<div class="a" style="left:722px;top:203px;width:1px;height:19px;background:#b0b0b0;"></div>
<div class="t" style="left:688.22px;top:206px;font-size:12.5px;line-height:14px;height:14px;color:#262626;">L</div>
<div class="a" style="left:784px;top:203px;width:1px;height:19px;background:#b0b0b0;"></div>
<div class="t" style="left:748.49px;top:206px;font-size:12.5px;line-height:14px;height:14px;color:#262626;">M</div>
<div class="a" style="left:846px;top:203px;width:1px;height:19px;background:#b0b0b0;"></div>
<div class="t" style="left:811.19px;top:206px;font-size:12.5px;line-height:14px;height:14px;color:#262626;">N</div>
<div class="a" style="left:908px;top:203px;width:1px;height:19px;background:#b0b0b0;"></div>
<div class="t" style="left:872.84px;top:206px;font-size:12.5px;line-height:14px;height:14px;color:#262626;">O</div>
<div class="a" style="left:970px;top:203px;width:1px;height:19px;background:#b0b0b0;"></div>
<div class="t" style="left:935.53px;top:206px;font-size:12.5px;line-height:14px;height:14px;color:#262626;">P</div>
<div class="a" style="left:1032px;top:203px;width:1px;height:19px;background:#b0b0b0;"></div>
<div class="t" style="left:996.84px;top:206px;font-size:12.5px;line-height:14px;height:14px;color:#262626;">Q</div>
<div class="a" style="left:1094px;top:203px;width:1px;height:19px;background:#b0b0b0;"></div>
<div class="t" style="left:1059.19px;top:206px;font-size:12.5px;line-height:14px;height:14px;color:#262626;">R</div>
<div class="a" style="left:1156px;top:203px;width:1px;height:19px;background:#b0b0b0;"></div>
<div class="t" style="left:1121.53px;top:206px;font-size:12.5px;line-height:14px;height:14px;color:#262626;">S</div>
<div class="a" style="left:1218px;top:203px;width:1px;height:19px;background:#b0b0b0;"></div>
<div class="t" style="left:1183.88px;top:206px;font-size:12.5px;line-height:14px;height:14px;color:#262626;">T</div>
<div class="a" style="left:1280px;top:203px;width:1px;height:19px;background:#b0b0b0;"></div>
<div class="t" style="left:1245.19px;top:206px;font-size:12.5px;line-height:14px;height:14px;color:#262626;">U</div>
<div class="a" style="left:1342px;top:203px;width:1px;height:19px;background:#b0b0b0;"></div>
<div class="t" style="left:1307.53px;top:206px;font-size:12.5px;line-height:14px;height:14px;color:#262626;">V</div>
<div class="a" style="left:0px;top:222px;width:1345px;height:1px;background:#9e9e9e;"></div>
<div class="a" style="left:1344px;top:222px;width:1px;height:496px;background:#a6a6a6;"></div>
<div class="a" style="left:0px;top:717px;width:1345px;height:1px;background:#a6a6a6;"></div>
<svg class="a" style="left:10px;top:207px;" width="12" height="12" viewBox="0 0 12 12"><path d="M12 0.5 V12 H0.5 Z" fill="#b7b7b7"/></svg>
<div class="a" style="left:0px;top:223px;width:25px;height:495px;background:#e6e6e6;"></div>
<div class="a" style="left:25px;top:223px;width:1px;height:495px;background:#b0b0b0;"></div>
<div class="a" style="left:0px;top:223px;width:25px;height:19px;background:#d2d2d2;"></div>
<div class="a" style="left:0px;top:242px;width:25px;height:1px;background:#c2c2c2;"></div>
<div class="t" style="left:9.32px;top:227px;font-size:12.5px;line-height:14px;height:14px;color:#217346;">1</div>
<div class="a" style="left:0px;top:278px;width:25px;height:1px;background:#c2c2c2;"></div>
<div class="t" style="left:9.32px;top:263px;font-size:12.5px;line-height:14px;height:14px;color:#262626;">2</div>
<div class="a" style="left:0px;top:298px;width:25px;height:1px;background:#c2c2c2;"></div>
<div class="t" style="left:9.32px;top:283px;font-size:12.5px;line-height:14px;height:14px;color:#262626;">3</div>
<div class="a" style="left:0px;top:318px;width:25px;height:1px;background:#c2c2c2;"></div>
<div class="t" style="left:9.32px;top:303px;font-size:12.5px;line-height:14px;height:14px;color:#262626;">4</div>
<div class="a" style="left:0px;top:338px;width:25px;height:1px;background:#c2c2c2;"></div>
<div class="t" style="left:9.32px;top:323px;font-size:12.5px;line-height:14px;height:14px;color:#262626;">5</div>
<div class="a" style="left:0px;top:358px;width:25px;height:1px;background:#c2c2c2;"></div>
<div class="t" style="left:9.32px;top:343px;font-size:12.5px;line-height:14px;height:14px;color:#262626;">6</div>
<div class="a" style="left:0px;top:378px;width:25px;height:1px;background:#c2c2c2;"></div>
<div class="t" style="left:9.32px;top:363px;font-size:12.5px;line-height:14px;height:14px;color:#262626;">7</div>
<div class="a" style="left:0px;top:398px;width:25px;height:1px;background:#c2c2c2;"></div>
<div class="t" style="left:9.32px;top:383px;font-size:12.5px;line-height:14px;height:14px;color:#262626;">8</div>
<div class="a" style="left:0px;top:418px;width:25px;height:1px;background:#c2c2c2;"></div>
<div class="t" style="left:9.32px;top:403px;font-size:12.5px;line-height:14px;height:14px;color:#262626;">9</div>
<div class="a" style="left:0px;top:438px;width:25px;height:1px;background:#c2c2c2;"></div>
<div class="t" style="left:5.85px;top:423px;font-size:12.5px;line-height:14px;height:14px;color:#262626;">10</div>
<div class="a" style="left:0px;top:458px;width:25px;height:1px;background:#c2c2c2;"></div>
<div class="t" style="left:6.31px;top:443px;font-size:12.5px;line-height:14px;height:14px;color:#262626;">11</div>
<div class="a" style="left:0px;top:478px;width:25px;height:1px;background:#c2c2c2;"></div>
<div class="t" style="left:5.85px;top:463px;font-size:12.5px;line-height:14px;height:14px;color:#262626;">12</div>
<div class="a" style="left:0px;top:498px;width:25px;height:1px;background:#c2c2c2;"></div>
<div class="t" style="left:5.85px;top:483px;font-size:12.5px;line-height:14px;height:14px;color:#262626;">13</div>
<div class="a" style="left:0px;top:518px;width:25px;height:1px;background:#c2c2c2;"></div>
<div class="t" style="left:5.85px;top:503px;font-size:12.5px;line-height:14px;height:14px;color:#262626;">14</div>
<div class="a" style="left:0px;top:538px;width:25px;height:1px;background:#c2c2c2;"></div>
<div class="t" style="left:5.85px;top:523px;font-size:12.5px;line-height:14px;height:14px;color:#262626;">15</div>
<div class="a" style="left:0px;top:558px;width:25px;height:1px;background:#c2c2c2;"></div>
<div class="t" style="left:5.85px;top:543px;font-size:12.5px;line-height:14px;height:14px;color:#262626;">16</div>
<div class="a" style="left:0px;top:578px;width:25px;height:1px;background:#c2c2c2;"></div>
<div class="t" style="left:5.85px;top:563px;font-size:12.5px;line-height:14px;height:14px;color:#262626;">17</div>
<div class="a" style="left:0px;top:598px;width:25px;height:1px;background:#c2c2c2;"></div>
<div class="t" style="left:5.85px;top:583px;font-size:12.5px;line-height:14px;height:14px;color:#262626;">18</div>
<div class="a" style="left:0px;top:618px;width:25px;height:1px;background:#c2c2c2;"></div>
<div class="t" style="left:5.85px;top:603px;font-size:12.5px;line-height:14px;height:14px;color:#262626;">19</div>
<div class="a" style="left:0px;top:638px;width:25px;height:1px;background:#c2c2c2;"></div>
<div class="t" style="left:5.85px;top:623px;font-size:12.5px;line-height:14px;height:14px;color:#262626;">20</div>
<div class="a" style="left:0px;top:658px;width:25px;height:1px;background:#c2c2c2;"></div>
<div class="t" style="left:5.85px;top:643px;font-size:12.5px;line-height:14px;height:14px;color:#262626;">21</div>
<div class="a" style="left:0px;top:678px;width:25px;height:1px;background:#c2c2c2;"></div>
<div class="t" style="left:5.85px;top:663px;font-size:12.5px;line-height:14px;height:14px;color:#262626;">22</div>
<div class="a" style="left:0px;top:698px;width:25px;height:1px;background:#c2c2c2;"></div>
<div class="t" style="left:5.85px;top:683px;font-size:12.5px;line-height:14px;height:14px;color:#262626;">23</div>
<div class="t" style="left:5.85px;top:703px;font-size:12.5px;line-height:14px;height:14px;color:#262626;">24</div>
<div class="a" style="left:26px;top:242px;width:1318px;height:36px;background:#adcdcd;"></div>
<svg class="a" style="left:48px;top:243px;" width="27" height="33" viewBox="0 0 27 33"><path d="M13.4 0.6 V3.6 M0.8 13.3 H4.2 M22.6 13.3 H26 M4.4 4.2 L6.8 6.6 M22.4 4.2 L20 6.6 M4.6 22 L6.8 19.8 M22.2 22 L20 19.8" stroke="#222" stroke-width="1.15" fill="none"/><path d="M13.4 6 a7.3 7.3 0 0 1 5.6 12 c-1.6 1.9 -2.6 3.6 -2.8 7 H10.6 c-0.2 -3.4 -1.2 -5.1 -2.8 -7 A7.3 7.3 0 0 1 13.4 6 Z" fill="#1d8348" stroke="#14261b" stroke-width="1.2"/><path d="M14.5 8.2 a5 5 0 0 1 3.6 3.4" fill="none" stroke="#5fb587" stroke-width="0.9" stroke-linecap="round"/><path d="M10.7 26 H16.1 M10.7 27.8 H16.1 M11 29.6 H15.8 M12 31.4 H14.8" stroke="#444" stroke-width="1.2"/></svg>
<div class="t" style="left:99.30px;top:249px;font-size:22px;line-height:25px;height:25px;color:#f7fbfb;letter-spacing:0.417px;">Cadastro Geral</div>
<div class="a" style="left:94px;top:298px;width:98px;height:20px;background:#fff;"></div>
<div class="a" style="left:95px;top:299px;width:96px;height:18.5px;background:#adcdcd;"></div>
<div class="a" style="left:94px;top:318px;width:98px;height:201px;background:#a9cbcb;"></div>
<div class="a" style="left:95px;top:318px;width:96px;height:20px;background:#fff;"></div>
<div class="a" style="left:95px;top:339px;width:96px;height:19px;background:#fff;"></div>
<div class="a" style="left:95px;top:359px;width:96px;height:19px;background:#fff;"></div>
<div class="a" style="left:95px;top:379px;width:96px;height:19px;background:#fff;"></div>
<div class="a" style="left:95px;top:399px;width:96px;height:19px;background:#fff;"></div>
<div class="a" style="left:95px;top:419px;width:96px;height:19px;background:#fff;"></div>
<div class="a" style="left:95px;top:439px;width:96px;height:19px;background:#fff;"></div>
<div class="a" style="left:95px;top:459px;width:96px;height:19px;background:#fff;"></div>
<div class="a" style="left:95px;top:479px;width:96px;height:19px;background:#fff;"></div>
<div class="a" style="left:95px;top:499px;width:96px;height:19px;background:#fff;"></div>
<div class="t" style="left:98.70px;top:302px;font-size:13px;line-height:15px;height:15px;color:#111;letter-spacing:0.558px;font-weight:bold;">MEDIDAS</div>
<div class="t" style="left:97.00px;top:322px;font-size:13px;line-height:15px;height:15px;color:#1a1a1a;">g</div>
<div class="t" style="left:97.00px;top:342px;font-size:13px;line-height:15px;height:15px;color:#1a1a1a;">mg</div>
<div class="t" style="left:97.00px;top:362px;font-size:13px;line-height:15px;height:15px;color:#1a1a1a;">kg</div>
<div class="t" style="left:97.00px;top:382px;font-size:13px;line-height:15px;height:15px;color:#1a1a1a;">l</div>
<div class="t" style="left:97.00px;top:402px;font-size:13px;line-height:15px;height:15px;color:#1a1a1a;">ml</div>
<div class="t" style="left:97.00px;top:422px;font-size:13px;line-height:15px;height:15px;color:#1a1a1a;">qtd</div>
<div class="a" style="left:253px;top:298px;width:98px;height:20px;background:#fff;"></div>
<div class="a" style="left:254px;top:299px;width:96px;height:18.5px;background:#adcdcd;"></div>
<div class="a" style="left:253px;top:318px;width:98px;height:201px;background:#a9cbcb;"></div>
<div class="a" style="left:254px;top:318px;width:96px;height:20px;background:#fff;"></div>
<div class="a" style="left:254px;top:339px;width:96px;height:19px;background:#fff;"></div>
<div class="a" style="left:254px;top:359px;width:96px;height:19px;background:#fff;"></div>
<div class="a" style="left:254px;top:379px;width:96px;height:19px;background:#fff;"></div>
<div class="a" style="left:254px;top:399px;width:96px;height:19px;background:#fff;"></div>
<div class="a" style="left:254px;top:419px;width:96px;height:19px;background:#fff;"></div>
<div class="a" style="left:254px;top:439px;width:96px;height:19px;background:#fff;"></div>
<div class="a" style="left:254px;top:459px;width:96px;height:19px;background:#fff;"></div>
<div class="a" style="left:254px;top:479px;width:96px;height:19px;background:#fff;"></div>
<div class="a" style="left:254px;top:499px;width:96px;height:19px;background:#fff;"></div>
<div class="t" style="left:257.70px;top:302px;font-size:13px;line-height:15px;height:15px;color:#111;letter-spacing:-0.241px;font-weight:bold;">REFEIÇÕES</div>
<div class="t" style="left:256.00px;top:322px;font-size:13px;line-height:15px;height:15px;color:#1a1a1a;letter-spacing:0.025px;">Café da manhã</div>
<div class="t" style="left:256.00px;top:342px;font-size:13px;line-height:15px;height:15px;color:#1a1a1a;letter-spacing:0.089px;">Lanche manhã</div>
<div class="t" style="left:256.00px;top:362px;font-size:13px;line-height:15px;height:15px;color:#1a1a1a;letter-spacing:0.390px;">Almoço</div>
<div class="t" style="left:256.00px;top:382px;font-size:13px;line-height:15px;height:15px;color:#1a1a1a;letter-spacing:0.100px;">Lanche tarde</div>
<div class="t" style="left:256.00px;top:402px;font-size:13px;line-height:15px;height:15px;color:#1a1a1a;letter-spacing:0.293px;">Jantar</div>
<div class="t" style="left:256.00px;top:422px;font-size:13px;line-height:15px;height:15px;color:#1a1a1a;letter-spacing:-0.579px;">Ceia</div>
<div class="a" style="left:24px;top:221px;width:17px;height:23px;border:2px solid #217346;"></div>
<div class="a" style="left:36px;top:239px;width:6px;height:6px;background:#217346;border-left:1px solid #eee;border-top:1px solid #eee;"></div>
<div class="a" style="left:1348px;top:205px;width:15px;height:15px;background:#fff;border:1px solid #ababab;"></div>
<svg class="a" style="left:1352px;top:210px;" width="8" height="5" viewBox="0 0 8 5"><path d="M0 4.2 L3.6 0.3 L7.2 4.2 Z" fill="#222"/></svg>
<div class="a" style="left:1348px;top:220px;width:15px;height:462px;background:#fff;border:1px solid #ababab;"></div>
<div class="a" style="left:1348px;top:682px;width:15px;height:21px;background:#f3f3f3;"></div>
<div class="a" style="left:1348px;top:703px;width:15px;height:15px;background:#fff;border:1px solid #ababab;"></div>
<svg class="a" style="left:1352px;top:709px;" width="8" height="5" viewBox="0 0 8 5"><path d="M0 0.2 H7.2 L3.6 4.2 Z" fill="#222"/></svg>
<svg class="a" style="left:25px;top:726px;" width="6" height="9" viewBox="0 0 6 9"><path d="M5 0.5 L0.8 4.5 L5 8.5 Z" fill="#c6c6c6"/></svg>
<svg class="a" style="left:55px;top:726px;" width="6" height="9" viewBox="0 0 6 9"><path d="M0.8 0.3 L5.4 4.5 L0.8 8.7 Z" fill="#217346"/></svg>
<div class="a" style="left:100px;top:721px;width:1px;height:20px;background:#ababab;"></div>
<div class="a" style="left:101px;top:719px;width:69px;height:23px;background:#d7e6e6;"></div>
<div class="t" style="left:114.00px;top:724px;font-size:12.5px;line-height:14px;height:14px;color:#222;letter-spacing:-0.460px;">INICIAL</div>
<div class="a" style="left:170px;top:717px;width:97px;height:25px;background:#fff;"></div>
<div class="a" style="left:170px;top:740px;width:97px;height:2px;background:#217346;"></div>
<div class="t" style="left:182.00px;top:724px;font-size:12.5px;line-height:14px;height:14px;color:#217346;letter-spacing:-0.786px;font-weight:bold;">CAD_GERAL</div>
<div class="t" style="left:279.00px;top:724px;font-size:12.5px;line-height:14px;height:14px;color:#444;letter-spacing:-0.509px;">CAD_NUTR</div>
<div class="a" style="left:357px;top:721px;width:1px;height:20px;background:#ababab;"></div>
<div class="t" style="left:372.00px;top:724px;font-size:12.5px;line-height:14px;height:14px;color:#444;letter-spacing:-0.446px;">CAD_ALIMENTOS</div>
<div class="a" style="left:487px;top:721px;width:1px;height:20px;background:#ababab;"></div>
<div class="t" style="left:501.00px;top:724px;font-size:12.5px;line-height:14px;height:14px;color:#444;letter-spacing:-0.613px;">CARDAPIO</div>
<div class="a" style="left:577px;top:721px;width:1px;height:20px;background:#ababab;"></div>
<div class="t" style="left:590.00px;top:724px;font-size:12.5px;line-height:14px;height:14px;color:#444;letter-spacing:-0.213px;">COMPARA</div>
<div class="a" style="left:665px;top:721px;width:1px;height:20px;background:#ababab;"></div>
<div class="t" style="left:677.50px;top:724px;font-size:12.5px;line-height:14px;height:14px;color:#444;letter-spacing:-0.872px;">RESUMO_CC</div>
<div class="a" style="left:758.5px;top:733px;width:2px;height:2px;background:#217346;"></div>
<div class="a" style="left:763px;top:733px;width:2px;height:2px;background:#217346;"></div>
<div class="a" style="left:767.5px;top:733px;width:2px;height:2px;background:#217346;"></div>
<svg class="a" style="left:783px;top:723px;" width="16" height="16" viewBox="0 0 16 16"><circle cx="8" cy="8" r="7.3" fill="none" stroke="#777" stroke-width="1"/><path d="M4.2 8 H11.8 M8 4.2 V11.8" stroke="#666" stroke-width="1.4"/></svg>
<div class="a" style="left:819px;top:726px;width:2px;height:2px;background:#c0c0c0;"></div>
<div class="a" style="left:819px;top:730.5px;width:2px;height:2px;background:#c0c0c0;"></div>
<div class="a" style="left:819px;top:735px;width:2px;height:2px;background:#c0c0c0;"></div>
<div class="a" style="left:836px;top:724px;width:15px;height:15px;background:#fff;border:1px solid #ababab;"></div>
<svg class="a" style="left:840px;top:727px;" width="6" height="9" viewBox="0 0 6 9"><path d="M4.8 0.6 L0.6 4.5 L4.8 8.4 Z" fill="#222"/></svg>
<div class="a" style="left:850px;top:724px;width:458px;height:15px;background:#fff;border:1px solid #ababab;"></div>
<div class="a" style="left:1308px;top:724px;width:22px;height:15px;background:#f3f3f3;"></div>
<div class="a" style="left:1330px;top:724px;width:15px;height:15px;background:#fff;border:1px solid #ababab;"></div>
<svg class="a" style="left:1335px;top:727px;" width="6" height="9" viewBox="0 0 6 9"><path d="M1 0.6 L5.2 4.5 L1 8.4 Z" fill="#222"/></svg>
<div class="a" style="left:0px;top:745px;width:1366px;height:21px;background:#f3f3f3;"></div>
<div class="a" style="left:0px;top:745px;width:1366px;height:1px;background:#c8c8c8;"></div>
<div class="a" style="left:0px;top:765px;width:1366px;height:1px;background:#fff;"></div>
<div class="t" style="left:7.00px;top:750px;font-size:12px;line-height:14px;height:14px;color:#333;letter-spacing:-0.351px;">Pronto</div>
<svg class="a" style="left:62px;top:749px;" width="14" height="14" viewBox="0 0 14 14"><rect x="1.6" y="1.6" width="11" height="11" fill="#fff"/><path d="M1.6 7 V12.5 H12.6 V1.5 H7.2" fill="none" stroke="#5c5c5c" stroke-width="1.1"/><rect x="7.2" y="1" width="5.9" height="2.8" fill="#5c5c5c"/><circle cx="2.9" cy="3" r="2.9" fill="#5c5c5c"/><path d="M6.3 6.5 H8 M9.3 6.5 H11 M3.3 8.5 H5 M6.3 8.5 H8 M9.3 8.5 H11 M3.3 10.5 H5 M6.3 10.5 H8 M9.3 10.5 H11" stroke="#5c5c5c" stroke-width="1"/></svg>
<div class="a" style="left:1066px;top:746px;width:40px;height:20px;background:#c6c6c6;"></div>
<svg class="a" style="left:1079px;top:749px;" width="14" height="13" viewBox="0 0 14 13"><rect x="0.5" y="0.5" width="12.5" height="12" fill="none" stroke="#666" stroke-width="1"/><path d="M4.7 0.5 V12.5 M8.9 0.5 V12.5 M0.5 4.5 H13 M0.5 8.5 H13" stroke="#666" stroke-width="1"/></svg>
<svg class="a" style="left:1119px;top:749px;" width="14" height="13" viewBox="0 0 14 13"><rect x="0.5" y="0.5" width="13" height="12" fill="none" stroke="#666" stroke-width="1"/><rect x="3.5" y="3.5" width="7" height="7" fill="none" stroke="#666" stroke-width="1"/><path d="M5 6 H9 M5 8 H9" stroke="#666" stroke-width="0.9"/></svg>
<svg class="a" style="left:1159px;top:749px;" width="14" height="13" viewBox="0 0 14 13"><rect x="0.5" y="0.5" width="13" height="12" fill="none" stroke="#777" stroke-width="1"/><path d="M4.5 0.5 V6.5 H9.5 V0.5" fill="none" stroke="#777" stroke-width="1"/></svg>
<div class="a" style="left:1192px;top:755.5px;width:8px;height:1px;background:#444;"></div>
<div class="a" style="left:1205px;top:755.5px;width:100px;height:1px;background:#555;"></div>
<div class="a" style="left:1253px;top:750px;width:5px;height:12px;background:#444;"></div>
<div class="a" style="left:1310px;top:755.5px;width:8px;height:1px;background:#444;"></div>
<div class="a" style="left:1313.5px;top:752px;width:1px;height:8px;background:#444;"></div>
<div class="t" style="left:1331.00px;top:750px;font-size:12px;line-height:14px;height:14px;color:#444;letter-spacing:-1.230px;">100%</div>
<div class="a" style="left:0px;top:766px;width:1366px;height:2px;background:#3a3a3a;"></div>
<div class="a" style="left:1362px;top:766px;width:4px;height:2px;background:#8a8a8a;"></div>
</body>
</html>
